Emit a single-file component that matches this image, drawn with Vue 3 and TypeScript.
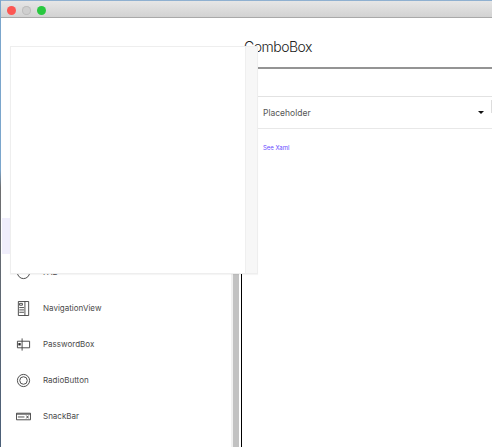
<script setup lang="ts">
interface NavItem { name: string; icon: string; selected?: boolean }
const items: NavItem[] = [
  { name: 'Button', icon: '' },
  { name: 'CalendarView', icon: '' },
  { name: 'CheckBox', icon: '' },
  { name: 'ColorPicker', icon: '' },
  { name: 'ComboBox', icon: '', selected: true },
  { name: 'FAB', icon: 'fab' },
  { name: 'NavigationView', icon: 'nav' },
  { name: 'PasswordBox', icon: 'pass' },
  { name: 'RadioButton', icon: 'radio' },
  { name: 'SnackBar', icon: 'snack' }
]
</script>

<template>
  <div class="window">
    <header class="titlebar">
      <span class="light red"></span>
      <span class="light grey"></span>
      <span class="light green"></span>
    </header>
    <div class="body">
      <aside class="sidebar">
        <nav class="list">
          <div v-for="item in items" :key="item.name" class="row" :class="{ selected: item.selected }">
            <svg class="icon" viewBox="0 0 16 16" fill="none" stroke="#444" stroke-width="1">
              <template v-if="item.icon === 'fab'">
                <circle cx="8" cy="8" r="6.5" />
              </template>
              <template v-else-if="item.icon === 'nav'">
                <path d="M2.5 .5h11v15h-11z M9.5 .5v15" />
                <path d="M3.8 2.5h3v2h-3z M3.5 7h5 M3.5 9.5h5 M3.5 12h5" />
              </template>
              <template v-else-if="item.icon === 'pass'">
                <path d="M1.5 4.5h13v7h-13z M6.5 1.5v13" />
                <rect x="2.5" y="6.5" width="2.5" height="2.5" fill="#222" stroke="none" />
              </template>
              <template v-else-if="item.icon === 'radio'">
                <circle cx="8" cy="8" r="6.5" />
                <circle cx="8" cy="8" r="4" />
              </template>
              <template v-else-if="item.icon === 'snack'">
                <path d="M.5 4.5h15v7h-15z M.5 5.5h15" />
                <path d="M2 8.5h7 M11 7l2.5 3 M13.5 7l-2.5 3" />
              </template>
            </svg>
            <span class="label">{{ item.name }}</span>
          </div>
        </nav>
        <div class="scrollbar"><div class="thumb"></div></div>
      </aside>
      <main class="content">
        <h1 class="heading">ComboBox</h1>
        <div class="combo">
          <span class="placeholder">Placeholder</span>
          <span class="arrow"></span>
        </div>
        <a class="xaml">See Xaml</a>
        <span class="edge"></span>
      </main>
    </div>
    <div class="popup">
      <div class="popup-pane"></div>
      <div class="popup-scroll"></div>
    </div>
  </div>
</template>

<style scoped>
.window {
  position: relative;
  width: 492px;
  height: 447px;
  overflow: hidden;
  background: #fff;
  font-family: Inter, "Liberation Sans", sans-serif;
  border-left: 1px solid transparent;
  border-image: linear-gradient(#7ba6cc 0, #7ba6cc 38%, #6f6f70 42%, #4a5f78 100%) 1;
  box-sizing: border-box;
}
.titlebar {
  height: 18px;
  box-sizing: border-box;
  display: flex;
  align-items: center;
  gap: 6px;
  padding: 2px 0 0 6px;
  background: linear-gradient(#e6e6e6, #d2d2d2);
  border-top: 1px solid #8fb0d0;
  border-bottom: 1px solid #a9a9a9;
}
.light {
  width: 9px;
  height: 9px;
  border-radius: 50%;
}
.red { background: #fc5753; }
.grey { background: #cfcfcf; box-shadow: inset 0 0 0 1px #bdbdbd; }
.green { background: #28c83f; }
.body {
  display: flex;
  height: 429px;
}
.sidebar {
  width: 241px;
  flex: none;
  display: flex;
  position: relative;
}
.sidebar::after {
  content: "";
  position: absolute;
  right: 0;
  top: 40px;
  bottom: 0;
  width: 1px;
  background: #000;
}
.list {
  flex: 1;
  padding-top: 56px;
  min-width: 0;
}
.row {
  height: 36px;
  display: flex;
  align-items: center;
  gap: 12px;
  padding-left: 14px;
  margin-left: 1px;
  margin-right: -1px;
}
.row.selected { background: #f0eefc; }
.icon {
  width: 15px;
  height: 15px;
  flex: none;
}
.label {
  font-size: 8px;
  color: #4a4a4a;
}
.scrollbar {
  width: 8px;
  margin: 40px 3px 0 0;
  flex: none;
  background: #f1f1f1;
  padding-left: 2px;
  box-sizing: border-box;
}
.thumb {
  height: 100%;
  width: 6px;
  background: #c2c2c2;
}
.content {
  position: relative;
  flex: 1;
  min-width: 0;
  padding-left: 2px;
}
.heading {
  margin: 0;
  height: 51px;
  box-sizing: border-box;
  padding-top: 20px;
  font-size: 14px;
  letter-spacing: -0.5px;
  line-height: 18px;
  font-weight: 300;
  color: #222;
  border-bottom: 2px solid #949494;
}
.combo {
  margin: 27px 0 0 -2px;
  height: 33px;
  box-sizing: border-box;
  display: flex;
  align-items: center;
  justify-content: space-between;
  padding: 0 8px 0 21px;
  border-top: 1px solid #e2e2e2;
  border-bottom: 1px solid #e8e8e8;
}
.placeholder {
  font-size: 8.5px;
  color: #555;
}
.arrow {
  width: 0;
  height: 0;
  border-left: 3px solid transparent;
  border-right: 3px solid transparent;
  border-top: 3px solid #111;
}
.xaml {
  display: block;
  margin: 15px 0 0 19px;
  font-size: 6px;
  line-height: 8px;
  color: #6a4cff;
}
.edge {
  position: absolute;
  right: 0;
  top: 82px;
  width: 1px;
  height: 13px;
  background: #ddd;
}
.popup {
  position: absolute;
  left: 9px;
  top: 46px;
  width: 248px;
  height: 228px;
  box-sizing: border-box;
  display: flex;
  background: #fff;
  border: 1px solid #eee;
  box-shadow: 0 1px 1px rgba(0, 0, 0, 0.04);
}
.popup-pane { flex: 1; }
.popup-scroll {
  width: 11px;
  background: #f7f7f7;
  border-left: 1px solid #efefef;
}
</style>
